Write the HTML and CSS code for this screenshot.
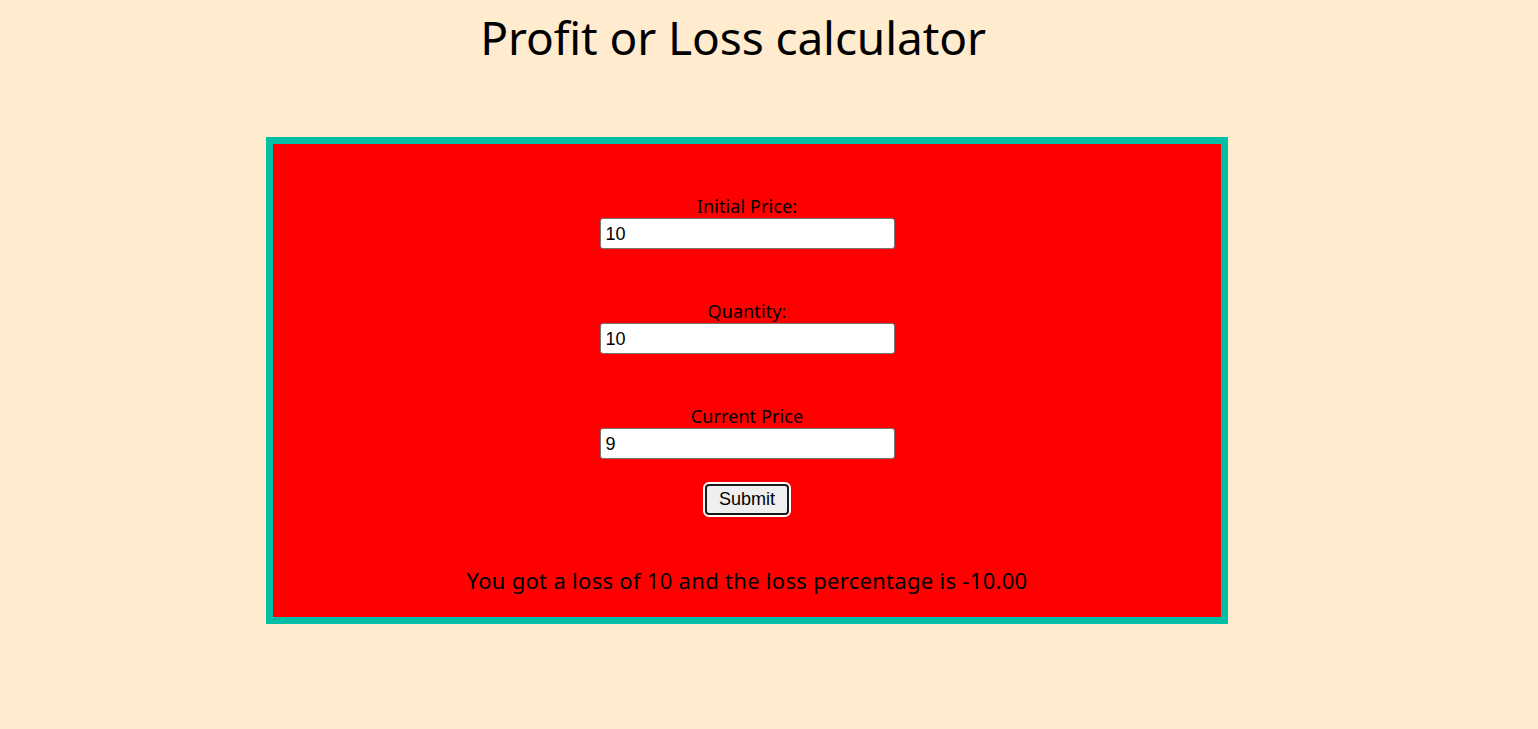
FILE: index.html
```html
<!DOCTYPE html>
<html>
<head>
<meta charset="utf-8">
<title>Profit or Loss calculator</title>
<link rel="stylesheet" href="styles.css">
</head>
<body>
<div class="page">
  <h1 class="title">Profit or Loss calculator</h1>
  <div class="card">
    <form class="form">
      <div class="field">
        <label class="label" for="ip">Initial Price:</label>
        <input class="input" id="ip" type="text" value="10">
      </div>
      <div class="field">
        <label class="label" for="qty">Quantity:</label>
        <input class="input" id="qty" type="text" value="10">
      </div>
      <div class="field">
        <label class="label" for="cp">Current Price</label>
        <input class="input" id="cp" type="text" value="9">
      </div>
      <button class="submit" type="button">Submit</button>
    </form>
    <p class="result">You got a loss of 10 and the loss percentage is -10.00</p>
  </div>
</div>
</body>
</html>
```
FILE: styles.css
```css
html, body {
  margin: 0;
  padding: 0;
}
body {
  background: #ffebcd;
  font-family: "Noto Sans", "Open Sans", sans-serif;
  color: #000;
}
.page {
  width: 962px;
  margin-left: 266px;
  display: flex;
  flex-direction: column;
}
.title {
  margin: 6px 28px 0 0;
  text-align: center;
  font-size: 46px;
  font-weight: 400;
  letter-spacing: -0.1px;
  line-height: 62px;
  height: 62px;
}
.card {
  margin-top: 69px;
  box-sizing: border-box;
  height: 487px;
  border: 7px solid #00bfa6;
  background: #ff0000;
  display: flex;
  flex-direction: column;
  align-items: center;
}
.form {
  margin-top: 50px;
  display: flex;
  flex-direction: column;
  align-items: center;
}
.field {
  display: flex;
  flex-direction: column;
  align-items: center;
  margin-bottom: 50px;
}
.field:nth-child(3) {
  margin-bottom: 22px;
}
.label {
  font-size: 18px;
  line-height: 24px;
  letter-spacing: 0.1px;
  height: 24px;
}
.input {
  box-sizing: border-box;
  width: 295px;
  height: 31px;
  border: 1px solid #767676;
  border-radius: 3px;
  background: #fff;
  padding: 1px 5px 0;
  font-family: "Liberation Sans", Arial, sans-serif;
  font-size: 18px;
  color: #000;
  outline: none;
}
.submit {
  box-sizing: border-box;
  height: 31px;
  padding: 0 12px;
  border: 2px solid #1a1a1a;
  border-radius: 4px;
  background: #efefef;
  font-family: "Liberation Sans", Arial, sans-serif;
  font-size: 18px;
  color: #000;
  outline: 2px solid #ffffff;
  outline-offset: 0;
  margin-top: 3px;
}
.result {
  margin: 51px 0 0;
  font-size: 22px;
  line-height: 28px;
  letter-spacing: 0.3px;
}
```
